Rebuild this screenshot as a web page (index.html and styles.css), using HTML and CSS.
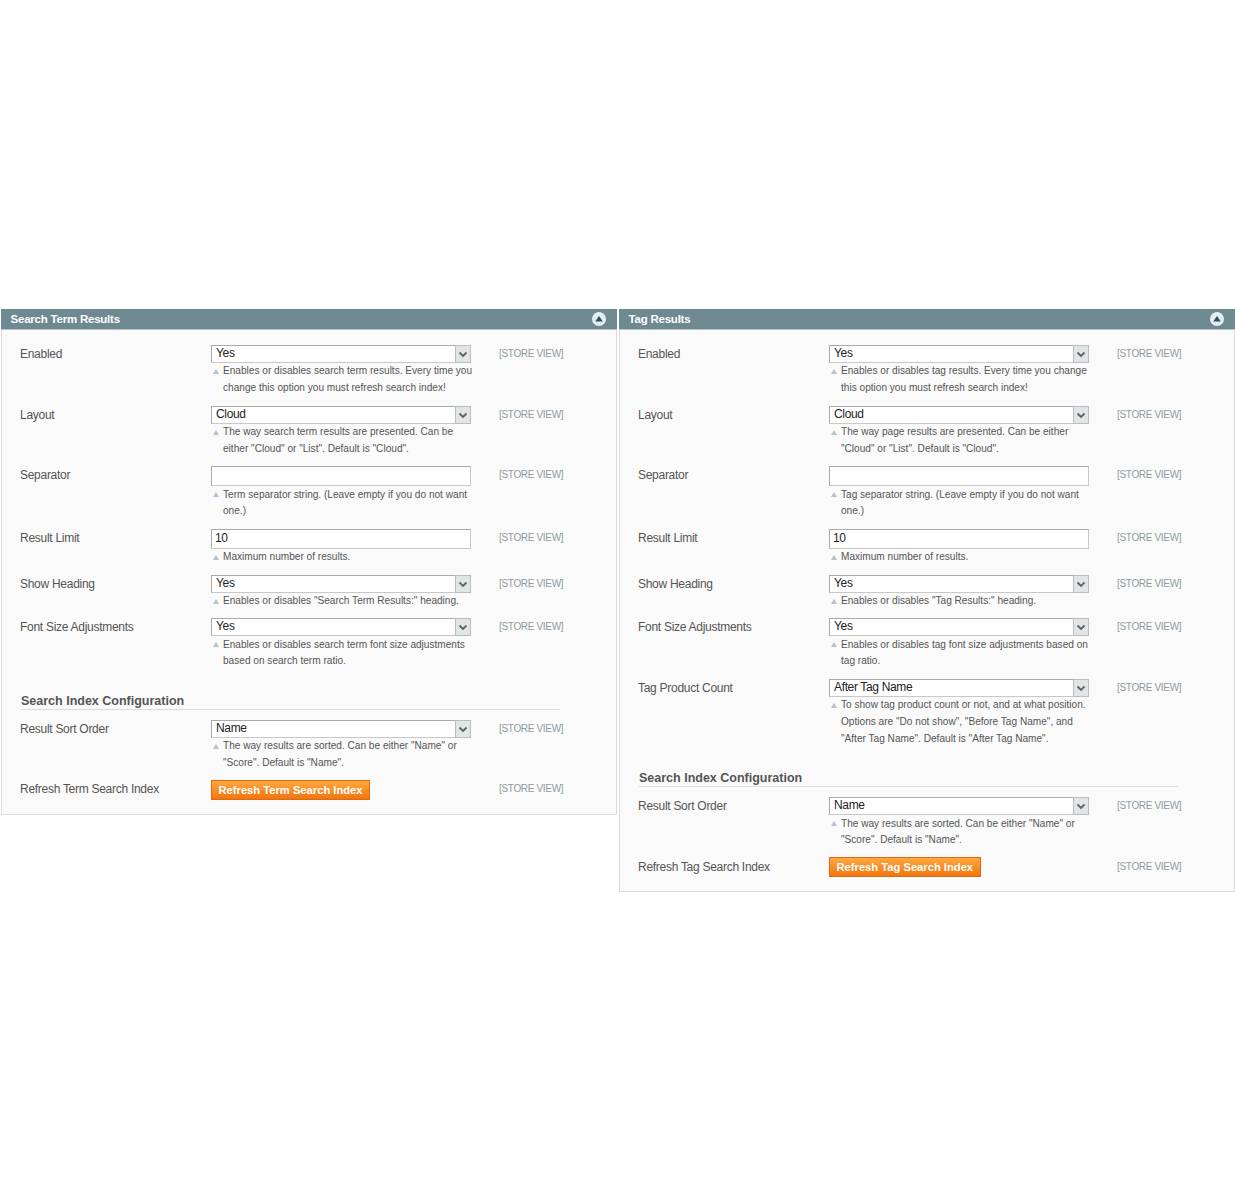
FILE: index.html
```html
<!DOCTYPE html>
<html lang="en">
<head>
<meta charset="utf-8">
<title>Search Term and Tag Results</title>
<link rel="stylesheet" href="styles.css">
</head>
<body>
<svg class="defs" width="0" height="0" aria-hidden="true">
  <defs>
    <symbol id="chev" viewBox="0 0 16 18"><path d="M4.5 7.5 L8 11 L11.5 7.5" fill="none" stroke="#5a6468" stroke-width="1.8"/></symbol>
  </defs>
</svg>
<main class="panels">
  <section class="panel">
    <header class="panel-head"><h2>Search Term Results</h2>
      <svg class="collapse" viewBox="0 0 16 16" width="16" height="16"><circle cx="8" cy="8" r="7" fill="#e4edf0"/><path d="M4.2 10.4 L8 5 L11.8 10.4 Z" fill="#24506a"/></svg>
    </header>
    <div class="panel-body">
      <div class="row"><div class="label">Enabled</div><div class="value"><div class="select"><select><option>Yes</option></select><span class="arrow"><svg width="16" height="18"><use href="#chev"/></svg></span></div><p class="note">Enables or disables search term results. Every time you<br>change this option you must refresh search index!</p></div><div class="scope">[STORE VIEW]</div></div>
      <div class="row"><div class="label">Layout</div><div class="value"><div class="select"><select><option>Cloud</option></select><span class="arrow"><svg width="16" height="18"><use href="#chev"/></svg></span></div><p class="note">The way search term results are presented. Can be<br>either "Cloud" or "List". Default is "Cloud".</p></div><div class="scope">[STORE VIEW]</div></div>
      <div class="row"><div class="label">Separator</div><div class="value"><input class="text" type="text" value=""><p class="note">Term separator string. (Leave empty if you do not want<br>one.)</p></div><div class="scope">[STORE VIEW]</div></div>
      <div class="row"><div class="label">Result Limit</div><div class="value"><input class="text" type="text" value="10"><p class="note">Maximum number of results.</p></div><div class="scope">[STORE VIEW]</div></div>
      <div class="row"><div class="label">Show Heading</div><div class="value"><div class="select"><select><option>Yes</option></select><span class="arrow"><svg width="16" height="18"><use href="#chev"/></svg></span></div><p class="note">Enables or disables "Search Term Results:" heading.</p></div><div class="scope">[STORE VIEW]</div></div>
      <div class="row"><div class="label">Font Size Adjustments</div><div class="value"><div class="select"><select><option>Yes</option></select><span class="arrow"><svg width="16" height="18"><use href="#chev"/></svg></span></div><p class="note">Enables or disables search term font size adjustments<br>based on search term ratio.</p></div><div class="scope">[STORE VIEW]</div></div>
      <h3 class="subhead">Search Index Configuration</h3>
      <div class="row"><div class="label">Result Sort Order</div><div class="value"><div class="select"><select><option>Name</option></select><span class="arrow"><svg width="16" height="18"><use href="#chev"/></svg></span></div><p class="note">The way results are sorted. Can be either "Name" or<br>"Score". Default is "Name".</p></div><div class="scope">[STORE VIEW]</div></div>
      <div class="row last"><div class="label">Refresh Term Search Index</div><div class="value"><button class="action" type="button">Refresh Term Search Index</button></div><div class="scope">[STORE VIEW]</div></div>
    </div>
  </section>
  <section class="panel">
    <header class="panel-head"><h2>Tag Results</h2>
      <svg class="collapse" viewBox="0 0 16 16" width="16" height="16"><circle cx="8" cy="8" r="7" fill="#e4edf0"/><path d="M4.2 10.4 L8 5 L11.8 10.4 Z" fill="#24506a"/></svg>
    </header>
    <div class="panel-body">
      <div class="row"><div class="label">Enabled</div><div class="value"><div class="select"><select><option>Yes</option></select><span class="arrow"><svg width="16" height="18"><use href="#chev"/></svg></span></div><p class="note">Enables or disables tag results. Every time you change<br>this option you must refresh search index!</p></div><div class="scope">[STORE VIEW]</div></div>
      <div class="row"><div class="label">Layout</div><div class="value"><div class="select"><select><option>Cloud</option></select><span class="arrow"><svg width="16" height="18"><use href="#chev"/></svg></span></div><p class="note">The way page results are presented. Can be either<br>"Cloud" or "List". Default is "Cloud".</p></div><div class="scope">[STORE VIEW]</div></div>
      <div class="row"><div class="label">Separator</div><div class="value"><input class="text" type="text" value=""><p class="note">Tag separator string. (Leave empty if you do not want<br>one.)</p></div><div class="scope">[STORE VIEW]</div></div>
      <div class="row"><div class="label">Result Limit</div><div class="value"><input class="text" type="text" value="10"><p class="note">Maximum number of results.</p></div><div class="scope">[STORE VIEW]</div></div>
      <div class="row"><div class="label">Show Heading</div><div class="value"><div class="select"><select><option>Yes</option></select><span class="arrow"><svg width="16" height="18"><use href="#chev"/></svg></span></div><p class="note">Enables or disables "Tag Results:" heading.</p></div><div class="scope">[STORE VIEW]</div></div>
      <div class="row"><div class="label">Font Size Adjustments</div><div class="value"><div class="select"><select><option>Yes</option></select><span class="arrow"><svg width="16" height="18"><use href="#chev"/></svg></span></div><p class="note">Enables or disables tag font size adjustments based on<br>tag ratio.</p></div><div class="scope">[STORE VIEW]</div></div>
      <div class="row"><div class="label">Tag Product Count</div><div class="value"><div class="select"><select><option>After Tag Name</option></select><span class="arrow"><svg width="16" height="18"><use href="#chev"/></svg></span></div><p class="note">To show tag product count or not, and at what position.<br>Options are "Do not show", "Before Tag Name", and<br>"After Tag Name". Default is "After Tag Name".</p></div><div class="scope">[STORE VIEW]</div></div>
      <h3 class="subhead">Search Index Configuration</h3>
      <div class="row"><div class="label">Result Sort Order</div><div class="value"><div class="select"><select><option>Name</option></select><span class="arrow"><svg width="16" height="18"><use href="#chev"/></svg></span></div><p class="note">The way results are sorted. Can be either "Name" or<br>"Score". Default is "Name".</p></div><div class="scope">[STORE VIEW]</div></div>
      <div class="row last"><div class="label">Refresh Tag Search Index</div><div class="value"><button class="action" type="button">Refresh Tag Search Index</button></div><div class="scope">[STORE VIEW]</div></div>
    </div>
  </section>
</main>
</body>
</html>
```
FILE: styles.css
```css
* { box-sizing: border-box; }
html, body { margin: 0; background: #fff; }
body { font-family: "Liberation Sans", Arial, sans-serif; font-size: 12px; color: #444; min-height: 1200px; padding: 309px 0 0 1px; }
.defs { position: absolute; }
.panels { display: flex; align-items: flex-start; gap: 2px; }
.panel { width: 616px; background: #fafafa; border: 1px solid #d8dcdc; border-top: 0; }
.panel-head { height: 21px; margin: 0 -1px; background: #6f8992; border-bottom: 1px solid #b6c4c9; display: flex; align-items: center; justify-content: space-between; padding: 0 10px 0 9.5px; }
.panel-head h2 { margin: 0; font-size: 11.5px; letter-spacing: -0.22px; line-height: 20px; font-weight: bold; color: #fff; }
.collapse { display: block; }
.panel-body { padding: 15px 0 0 18px; }
.row { display: grid; grid-template-columns: 191px 288px 1fr; padding-bottom: 8.6px; }
.row.last { padding-bottom: 13.9px; }
.label { font-size: 12px; letter-spacing: -0.28px; line-height: 18px; color: #555; }
.select { position: relative; width: 260px; height: 18px; }
.select select { display: block; width: 100%; height: 18px; padding: 0 0 1px 4px; border: 1px solid #aaa; border-right-color: #c8c8c8; border-bottom-color: #c8c8c8; border-radius: 0; background: #fff; color: #222; font: 12px/15px "Liberation Sans", Arial, sans-serif; letter-spacing: -0.35px; appearance: none; }
.arrow { position: absolute; top: 0; right: 0; width: 16px; height: 18px; background: #e2e5e6; border: 1px solid #bcbcbc; }
.arrow svg { display: block; margin: -1px 0 0 -1px; }
input.text { display: block; width: 260px; height: 20px; padding: 0 3px 2px; border: 1px solid #aaa; border-right-color: #c8c8c8; border-bottom-color: #c8c8c8; background: #fff; color: #222; font: 12px "Liberation Sans", Arial, sans-serif; letter-spacing: -0.35px; }
.note { position: relative; margin: 0; padding: 0.4px 0 0 12px; font-size: 10.1px; line-height: 16.8px; color: #555; white-space: nowrap; }
.note::before { content: ""; position: absolute; left: 2px; top: 6px; border: 3px solid transparent; border-top: 0; border-bottom: 5px solid #b5c2c7; }
.scope { font-size: 10px; letter-spacing: -0.33px; line-height: 17px; color: #8f9ba1; }
.subhead { margin: 13px 56px 10px 1px; height: 18px; border-bottom: 1px solid #d8dcdc; font-size: 12.5px; line-height: 19px; font-weight: bold; color: #555; }
.action { display: block; height: 20px; margin-top: -0.5px; padding: 0 6.5px; border: 1px solid #e06a10; background: linear-gradient(#ffa83f, #f2750f); color: #fff; font: bold 11.2px/18px "Liberation Sans", Arial, sans-serif; white-space: nowrap; }
```
